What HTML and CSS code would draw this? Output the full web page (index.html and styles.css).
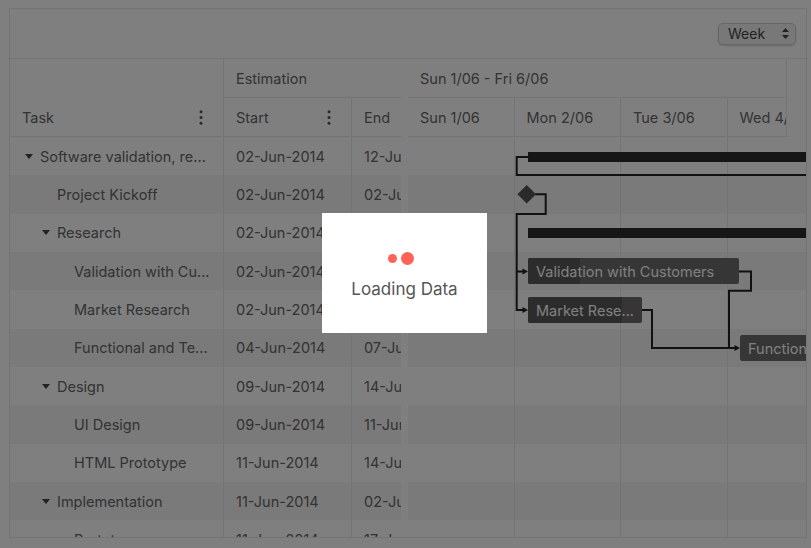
FILE: index.html
```html
<!DOCTYPE html>
<html lang="en">
<head>
<meta charset="utf-8">
<title>Gantt - Loading</title>
<link rel="stylesheet" href="styles.css">
</head>
<body>
<div class="gantt">
  <div class="toolbar">
    <div class="view-select">
      <span>Week</span>
      <svg class="select-arrows" width="7" height="11" viewBox="0 0 7 11"><path d="M3.5 0L7 4H0z"/><path d="M0 7h7L3.5 11z"/></svg>
    </div>
  </div>
  <div class="panes">
    <div class="grid-pane">
      <div class="grid-header">
        <div class="th th-task"><span class="th-inner"><span>Task</span><svg class="kebab" width="4" height="15" viewBox="0 0 4 15"><circle cx="2" cy="1.7" r="1.5"/><circle cx="2" cy="7.5" r="1.5"/><circle cx="2" cy="13.3" r="1.5"/></svg></span></div>
        <div class="th th-group">Estimation</div>
        <div class="th th-start"><span>Start</span><svg class="kebab" width="4" height="15" viewBox="0 0 4 15"><circle cx="2" cy="1.7" r="1.5"/><circle cx="2" cy="7.5" r="1.5"/><circle cx="2" cy="13.3" r="1.5"/></svg></div>
        <div class="th th-end">End</div>
      </div>
      <div class="grid-body">
        <div class="row"><div class="td task l0"><svg class="caret" width="8" height="5" viewBox="0 0 8 5"><path d="M0 0h8L4 5z"/></svg>Software validation, re...</div><div class="td">02-Jun-2014</div><div class="td">12-Jun-2014</div></div>
        <div class="row"><div class="td task l1"><span class="spacer"></span>Project Kickoff</div><div class="td">02-Jun-2014</div><div class="td">02-Jun-2014</div></div>
        <div class="row"><div class="td task l1"><svg class="caret" width="8" height="5" viewBox="0 0 8 5"><path d="M0 0h8L4 5z"/></svg>Research</div><div class="td">02-Jun-2014</div><div class="td">07-Jun-2014</div></div>
        <div class="row"><div class="td task l2"><span class="spacer"></span>Validation with Cu...</div><div class="td">02-Jun-2014</div><div class="td">04-Jun-2014</div></div>
        <div class="row"><div class="td task l2"><span class="spacer"></span>Market Research</div><div class="td">02-Jun-2014</div><div class="td">03-Jun-2014</div></div>
        <div class="row"><div class="td task l2"><span class="spacer"></span>Functional and Te...</div><div class="td">04-Jun-2014</div><div class="td">07-Jun-2014</div></div>
        <div class="row"><div class="td task l1"><svg class="caret" width="8" height="5" viewBox="0 0 8 5"><path d="M0 0h8L4 5z"/></svg>Design</div><div class="td">09-Jun-2014</div><div class="td">14-Jun-2014</div></div>
        <div class="row"><div class="td task l2"><span class="spacer"></span>UI Design</div><div class="td">09-Jun-2014</div><div class="td">11-Jun-2014</div></div>
        <div class="row"><div class="td task l2"><span class="spacer"></span>HTML Prototype</div><div class="td">11-Jun-2014</div><div class="td">14-Jun-2014</div></div>
        <div class="row"><div class="td task l1"><svg class="caret" width="8" height="5" viewBox="0 0 8 5"><path d="M0 0h8L4 5z"/></svg>Implementation</div><div class="td">11-Jun-2014</div><div class="td">02-Jul-2014</div></div>
        <div class="row"><div class="td task l2"><span class="spacer"></span>Prototype</div><div class="td">11-Jun-2014</div><div class="td">17-Jun-2014</div></div>
      </div>
    </div>
    <div class="splitter"></div>
    <div class="timeline-pane">
      <div class="tl-header">
        <div class="tl-week">Sun 1/06 - Fri 6/06</div>
        <div class="tl-days">
          <div class="tl-day">Sun 1/06</div>
          <div class="tl-day">Mon 2/06</div>
          <div class="tl-day">Tue 3/06</div>
          <div class="tl-day">Wed 4/06</div>
        </div>
      </div>
      <div class="tl-body">
        <div class="tl-row"><div class="tl-cell"></div><div class="tl-cell"></div><div class="tl-cell"></div><div class="tl-cell"></div></div>
        <div class="tl-row"><div class="tl-cell"></div><div class="tl-cell"></div><div class="tl-cell"></div><div class="tl-cell"></div></div>
        <div class="tl-row"><div class="tl-cell"></div><div class="tl-cell"></div><div class="tl-cell"></div><div class="tl-cell"></div></div>
        <div class="tl-row"><div class="tl-cell"></div><div class="tl-cell"></div><div class="tl-cell"></div><div class="tl-cell"></div></div>
        <div class="tl-row"><div class="tl-cell"></div><div class="tl-cell"></div><div class="tl-cell"></div><div class="tl-cell"></div></div>
        <div class="tl-row"><div class="tl-cell"></div><div class="tl-cell"></div><div class="tl-cell"></div><div class="tl-cell"></div></div>
        <div class="tl-row"><div class="tl-cell"></div><div class="tl-cell"></div><div class="tl-cell"></div><div class="tl-cell"></div></div>
        <div class="tl-row"><div class="tl-cell"></div><div class="tl-cell"></div><div class="tl-cell"></div><div class="tl-cell"></div></div>
        <div class="tl-row"><div class="tl-cell"></div><div class="tl-cell"></div><div class="tl-cell"></div><div class="tl-cell"></div></div>
        <div class="tl-row"><div class="tl-cell"></div><div class="tl-cell"></div><div class="tl-cell"></div><div class="tl-cell"></div></div>
        <div class="tl-row"><div class="tl-cell"></div><div class="tl-cell"></div><div class="tl-cell"></div><div class="tl-cell"></div></div>

        <div class="bar summary" style="left:119.5px;top:15px;width:320px"></div>
        <div class="bar summary" style="left:120px;top:91px;width:320px"></div>
        <div class="bar task" style="left:120px;top:121px;width:211px"><div class="progress" style="width:52px"></div><span class="bar-text">Validation with Customers</span></div>
        <div class="bar task" style="left:120px;top:160px;width:114px"><div class="progress" style="width:94px"></div><span class="bar-text">Market Rese...</span></div>
        <div class="bar task" style="left:332px;top:198px;width:120px"><div class="progress" style="width:0px"></div><span class="bar-text">Functional and Technical Requirements</span></div>

        <svg class="deps" width="400" height="260" viewBox="0 0 400 260">
          <g transform="translate(0 1)">
            <g class="lines">
              <path d="M121 19H108.7V37H400"/>
              <path d="M127 56.3H137.7V76H108.7V172H115"/>
              <path d="M108.7 133.5H115"/>
              <path d="M331 133.5H343V152.7H321V210H327"/>
              <path d="M234 172H244V210H327"/>
            </g>
            <g class="heads">
              <polygon points="114.5,130.5 120,133.5 114.5,136.5"/>
              <polygon points="114.5,169 120,172 114.5,175"/>
              <polygon points="326.5,207 332,210 326.5,213"/>
            </g>
            <polygon class="milestone" points="118.7,47 128,56.3 118.7,65.6 109.4,56.3"/>
          </g>
        </svg>
      </div>
    </div>
  </div>
</div>

<div class="loading-mask">
  <div class="loading-box">
    <div class="dots"><span class="dot dot-small"></span><span class="dot dot-big"></span></div>
    <div class="loading-text">Loading Data</div>
  </div>
</div>
</body>
</html>
```

FILE: styles.css
```css
* { box-sizing: border-box; }

html, body {
  margin: 0;
  height: 100%;
}

body {
  background: #fff;
  font-family: Inter, "Liberation Sans", sans-serif;
  font-size: 14.5px;
  color: #666;
  overflow: hidden;
}

.gantt {
  margin: 8px 0 0 9px;
  width: 798px;
  height: 530px;
  border: 1px solid #e8e8e8;
  display: flex;
  flex-direction: column;
  overflow: hidden;
}

/* toolbar */
.toolbar {
  flex: none;
  height: 50px;
  border-bottom: 1px solid #e8e8e8;
  display: flex;
  align-items: center;
  justify-content: flex-end;
  padding-right: 10px;
}

.view-select {
  width: 78px;
  height: 22px;
  border: 1px solid #cfcfcf;
  border-radius: 5px;
  background: #f1f1f1;
  box-shadow: 0 1px 2px rgba(0, 0, 0, 0.18);
  display: flex;
  align-items: center;
  justify-content: space-between;
  padding: 0 6px 0 9px;
  color: #444;
  font-size: 14px;
}

.select-arrows { fill: #444; }

/* panes */
.panes {
  flex: 1;
  min-height: 0;
  display: flex;
}

.grid-pane {
  flex: none;
  width: 391px;
  overflow: hidden;
}

.splitter {
  flex: none;
  width: 7px;
}

.timeline-pane {
  flex: 1;
  min-width: 0;
  overflow: hidden;
}

/* grid header */
.grid-header {
  display: grid;
  grid-template-columns: 214px 128px 128px;
  grid-template-rows: 39px 39px;
}

.th {
  border-bottom: 1px solid #e8e8e8;
  border-right: 1px solid #e8e8e8;
  padding: 0 12px;
  display: flex;
  align-items: center;
  white-space: nowrap;
  color: #666;
}

.th-task {
  grid-row: 1 / 3;
  align-items: flex-end;
  padding: 0;
}

.th-inner {
  width: 100%;
  height: 38px;
  padding: 0 20px 0 12px;
  display: flex;
  align-items: center;
  justify-content: space-between;
}

.th-group { grid-column: 2 / 4; border-right: 0; }

.th-start {
  justify-content: space-between;
  padding-right: 20px;
}

.th-end { border-right: 0; }

.kebab { fill: #555; flex: none; }

/* grid body */
.row {
  display: grid;
  grid-template-columns: 214px 128px 128px;
  height: 38.33px;
}

.row:nth-child(even), .tl-row:nth-child(even) { background: #f4f4f4; }

.td {
  border-right: 1px solid #e8e8e8;
  padding: 0 12px;
  display: flex;
  align-items: center;
  white-space: nowrap;
  overflow: hidden;
}

.td:last-child { border-right: 0; }

.td.l1 { padding-left: 29px; }
.td.l2 { padding-left: 46px; }

.caret {
  flex: none;
  fill: #444;
  margin: 0 7px 0 3px;
}

.spacer {
  flex: none;
  width: 18px;
}

/* timeline header */
.tl-header {
  width: 379px;
  border-right: 1px solid #e8e8e8;
}

.tl-week {
  height: 39px;
  border-bottom: 1px solid #e8e8e8;
  padding: 0 12px;
  display: flex;
  align-items: center;
  white-space: nowrap;
}

.tl-days {
  display: flex;
  height: 39px;
  border-bottom: 1px solid #e8e8e8;
  overflow: hidden;
}

.tl-day {
  flex: none;
  width: 106.5px;
  border-right: 1px solid #e8e8e8;
  padding: 0 12px;
  display: flex;
  align-items: center;
  white-space: nowrap;
}

/* timeline body */
.tl-body {
  position: relative;
  width: 440px;
}

.tl-row {
  display: flex;
  height: 38.33px;
}

.tl-cell {
  flex: none;
  width: 106.5px;
  border-right: 1px solid #e8e8e8;
}

.bar {
  position: absolute;
  overflow: hidden;
}

.bar.summary {
  height: 10px;
  background: #2c2c2c;
}

.bar.task {
  height: 26px;
  background: #6c6c6c;
  border-radius: 2px;
  display: flex;
  align-items: center;
}

.progress {
  position: absolute;
  left: 0;
  top: 0;
  bottom: 0;
  background: #585858;
}

.bar-text {
  position: relative;
  padding-left: 8px;
  color: #fff;
  white-space: nowrap;
}

.deps {
  position: absolute;
  left: 0;
  top: 0;
  overflow: visible;
}

.deps .lines path {
  fill: none;
  stroke: #222;
  stroke-width: 2;
}

.deps .heads polygon { fill: #222; }

.deps .milestone { fill: #555; }

/* loading overlay */
.loading-mask {
  position: fixed;
  inset: 0;
  background: rgba(0, 0, 0, 0.5);
  display: flex;
  align-items: center;
  justify-content: center;
}

.loading-box {
  width: 165px;
  height: 120px;
  margin: 0 2px 2px 0;
  background: #fff;
  display: flex;
  flex-direction: column;
  align-items: center;
  padding-top: 39px;
}

.dots {
  display: flex;
  align-items: center;
  gap: 4px;
  height: 13px;
  margin-right: 7px;
}

.dot {
  border-radius: 50%;
  background: #ff6358;
}

.dot-small { width: 9px; height: 9px; }
.dot-big { width: 13px; height: 13px; }

.loading-text {
  margin-top: 14px;
  line-height: 21px;
  font-size: 17px;
  color: #555;
}
```
